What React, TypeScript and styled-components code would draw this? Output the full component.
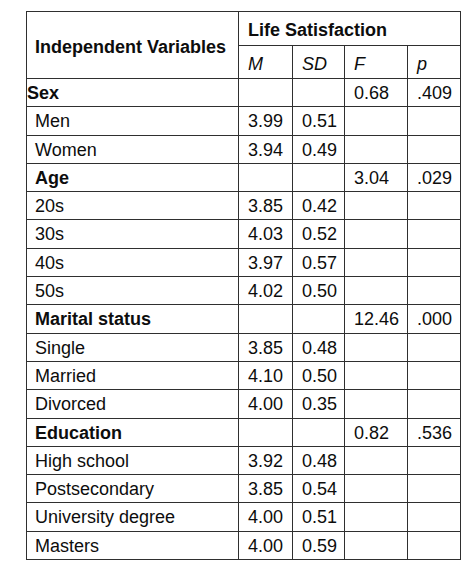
import React from "react";
import styled, { createGlobalStyle } from "styled-components";

const GlobalStyle = createGlobalStyle`
  html, body {
    margin: 0;
    padding: 0;
    background: #ffffff;
  }
  body {
    font-family: "Liberation Sans", Arial, sans-serif;
    color: #0d0d0d;
  }
`;

const Page = styled.div`
  padding: 11px 0 0 26px;
`;

const Table = styled.table`
  border-collapse: collapse;
  table-layout: fixed;
  width: 435px;
  font-family: "Liberation Sans", Arial, sans-serif;
  font-size: 18px;
  color: #0d0d0d;
`;

const HeadRow = styled.tr<{ $h: number }>`
  height: ${(p) => p.$h}px;
`;

const HeadCell = styled.th<{ $italic?: boolean; $pad?: number }>`
  border: 1px solid #2f2f2f;
  padding: ${(p) => p.$pad ?? 4}px 4px 0 9px;
  vertical-align: middle;
  text-align: left;
  white-space: nowrap;
  line-height: 20px;
  font-weight: ${(p) => (p.$italic ? 400 : 700)};
  font-style: ${(p) => (p.$italic ? "italic" : "normal")};
`;

const VarHead = styled(HeadCell)`
  padding-left: 8px;
`;

const BodyRow = styled.tr`
  height: 28.3px;
`;

const Cell = styled.td`
  border: 1px solid #2f2f2f;
  padding: 4px 4px 0 9px;
  vertical-align: top;
  text-align: left;
  white-space: nowrap;
  line-height: 20px;
`;

const LabelCell = styled(Cell)<{ $bold?: boolean; $flush?: boolean }>`
  padding-left: ${(p) => (p.$flush ? 0 : 8)}px;
  font-weight: ${(p) => (p.$bold ? 700 : 400)};
`;

type Item = [string, string, string];
type Group = { label: string; F: string; p: string; flush?: boolean; items: Item[] };

const groups: Group[] = [
  {
    label: "Sex",
    F: "0.68",
    p: ".409",
    flush: true,
    items: [
      ["Men", "3.99", "0.51"],
      ["Women", "3.94", "0.49"],
    ],
  },
  {
    label: "Age",
    F: "3.04",
    p: ".029",
    items: [
      ["20s", "3.85", "0.42"],
      ["30s", "4.03", "0.52"],
      ["40s", "3.97", "0.57"],
      ["50s", "4.02", "0.50"],
    ],
  },
  {
    label: "Marital status",
    F: "12.46",
    p: ".000",
    items: [
      ["Single", "3.85", "0.48"],
      ["Married", "4.10", "0.50"],
      ["Divorced", "4.00", "0.35"],
    ],
  },
  {
    label: "Education",
    F: "0.82",
    p: ".536",
    items: [
      ["High school", "3.92", "0.48"],
      ["Postsecondary", "3.85", "0.54"],
      ["University degree", "4.00", "0.51"],
      ["Masters", "4.00", "0.59"],
    ],
  },
];

export default function App() {
  return (
    <>
      <GlobalStyle />
      <Page>
        <Table>
          <colgroup>
            <col style={{ width: 212 }} />
            <col style={{ width: 54 }} />
            <col style={{ width: 52 }} />
            <col style={{ width: 63 }} />
            <col style={{ width: 53 }} />
          </colgroup>
          <thead>
            <HeadRow $h={34}>
              <VarHead rowSpan={2}>Independent Variables</VarHead>
              <HeadCell colSpan={4} $pad={3}>
                Life Satisfaction
              </HeadCell>
            </HeadRow>
            <HeadRow $h={33}>
              <HeadCell $italic>M</HeadCell>
              <HeadCell $italic>SD</HeadCell>
              <HeadCell $italic>F</HeadCell>
              <HeadCell $italic>p</HeadCell>
            </HeadRow>
          </thead>
          <tbody>
            {groups.map((g) => (
              <React.Fragment key={g.label}>
                <BodyRow>
                  <LabelCell $bold $flush={g.flush}>
                    {g.label}
                  </LabelCell>
                  <Cell />
                  <Cell />
                  <Cell>{g.F}</Cell>
                  <Cell>{g.p}</Cell>
                </BodyRow>
                {g.items.map(([name, m, sd]) => (
                  <BodyRow key={name}>
                    <LabelCell>{name}</LabelCell>
                    <Cell>{m}</Cell>
                    <Cell>{sd}</Cell>
                    <Cell />
                    <Cell />
                  </BodyRow>
                ))}
              </React.Fragment>
            ))}
          </tbody>
        </Table>
      </Page>
    </>
  );
}
